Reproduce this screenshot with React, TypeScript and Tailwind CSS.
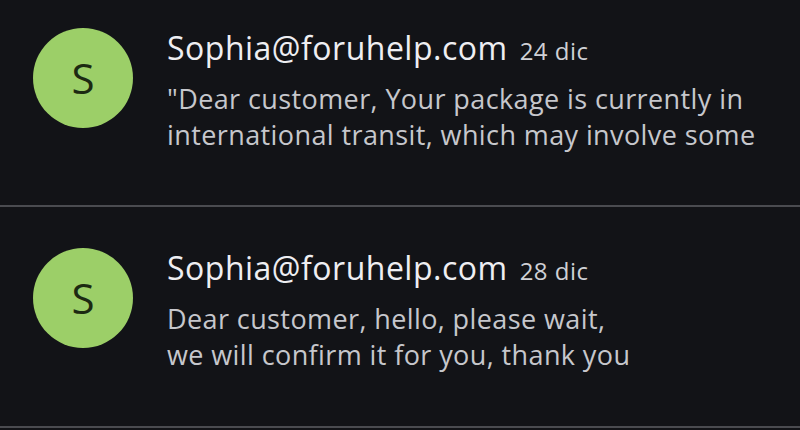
const MESSAGES = [
  {
    from: "Sophia@foruhelp.com",
    date: "24 dic",
    lines: ['"Dear customer, Your package is currently in', "international transit, which may involve some"],
  },
  {
    from: "Sophia@foruhelp.com",
    date: "28 dic",
    lines: ["Dear customer, hello, please wait,", "we will confirm it for you, thank you"],
  },
];

function Avatar({ letter }: { letter: string }) {
  return (
    <div className="flex h-[100px] w-[100px] shrink-0 items-center justify-center rounded-full bg-[#9ccf68]">
      <span className="text-[42px] leading-none text-[#1c2a12]">{letter}</span>
    </div>
  );
}

function MessageRow({ m, first }: { m: (typeof MESSAGES)[number]; first: boolean }) {
  return (
    <div className={`flex items-start pl-[33px] ${first ? "h-[205px] pt-[28px]" : "h-[219px] pt-[41px]"}`}>
      <Avatar letter={m.from[0]} />
      <div className="ml-[34px] pt-[2px]">
        <div className="flex items-baseline gap-[12px] leading-[36px]">
          <span className="text-[32px] tracking-[0.5px] text-[#eeeef2]">{m.from}</span>
          <span className="text-[24px] tracking-[0.5px] text-[#cfd0d5]">{m.date}</span>
        </div>
        <div className="mt-[12px] text-[27px] leading-[36px] tracking-[0.4px] text-[#c6c7cc]">
          {m.lines.map((l) => (
            <div key={l}>{l}</div>
          ))}
        </div>
      </div>
    </div>
  );
}

export default function App() {
  return (
    <div
      className="h-[430px] w-[800px] overflow-hidden bg-[#121317]"
      style={{ fontFamily: "'Open Sans', Roboto, sans-serif" }}
    >
      {MESSAGES.map((m, i) => (
        <div key={i}>
          <MessageRow m={m} first={i === 0} />
          <div className="h-[2px] bg-[#4a4b50]" />
        </div>
      ))}
    </div>
  );
}
